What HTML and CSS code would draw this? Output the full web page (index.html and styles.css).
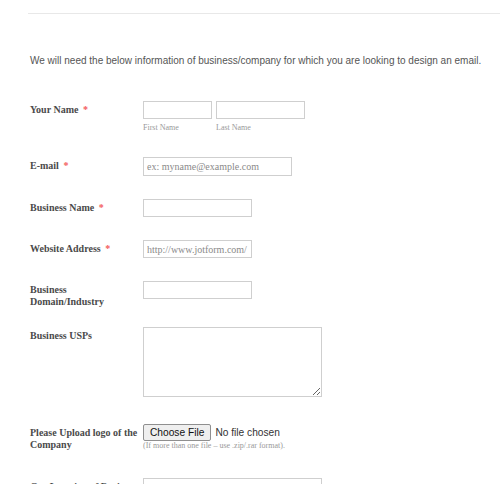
FILE: index.html
```html
<!DOCTYPE html>
<html lang="en">
<head>
    <meta charset="UTF-8">
    <meta name="viewport" content="width=device-width, initial-scale=1.0">
    <title>Email Design Request</title>
    <link rel="stylesheet" href="styles.css">
</head>
<body>
    <div class="page">
        <div class="divider"></div>

        <p class="intro">We will need the below information of business/company for which you are looking to design an email.</p>

        <ul class="form-list">
            <li class="form-line">
                <label class="form-label">Your Name <span class="required">*</span></label>
                <div class="form-input">
                    <div class="name-fields">
                        <span class="sub-field">
                            <input type="text" class="text-input first-name">
                            <span class="sub-label">First Name</span>
                        </span>
                        <span class="sub-field">
                            <input type="text" class="text-input last-name">
                            <span class="sub-label">Last Name</span>
                        </span>
                    </div>
                </div>
            </li>

            <li class="form-line">
                <label class="form-label">E-mail <span class="required">*</span></label>
                <div class="form-input">
                    <input type="email" class="text-input email" placeholder="ex: myname@example.com">
                </div>
            </li>

            <li class="form-line">
                <label class="form-label">Business Name <span class="required">*</span></label>
                <div class="form-input">
                    <input type="text" class="text-input short">
                </div>
            </li>

            <li class="form-line">
                <label class="form-label">Website Address <span class="required">*</span></label>
                <div class="form-input">
                    <input type="text" class="text-input short" placeholder="http://www.jotform.com/">
                </div>
            </li>

            <li class="form-line form-line-tight">
                <label class="form-label">Business Domain/Industry</label>
                <div class="form-input">
                    <input type="text" class="text-input short">
                </div>
            </li>

            <li class="form-line">
                <label class="form-label">Business USPs</label>
                <div class="form-input">
                    <textarea class="textarea"></textarea>
                </div>
            </li>

            <li class="form-line form-line-loose">
                <label class="form-label">Please Upload logo of the Company</label>
                <div class="form-input">
                    <input type="file" class="file-input">
                    <span class="sub-label file-note">(If more than one file &ndash; use .zip/.rar format).</span>
                </div>
            </li>

            <li class="form-line">
                <label class="form-label">Geo Location of Business</label>
                <div class="form-input">
                    <textarea class="textarea"></textarea>
                </div>
            </li>
        </ul>
    </div>
</body>
</html>
```

FILE: styles.css
```css
body {
    margin: 0;
    background-color: #fff;
    color: #555;
    font-family: "Liberation Serif", "Times New Roman", serif;
}
.page {
    padding: 13px 0 0 28px;
}
.divider {
    border-top: 1px solid #e8e8e8;
}
.intro {
    font-family: "Liberation Sans", Arial, sans-serif;
    font-size: 10px;
    line-height: 14px;
    color: #555;
    margin: 40px 0 0 2px;
}
.form-list {
    list-style: none;
    margin: 33px 0 0 2px;
    padding: 0;
}
.form-line {
    display: flex;
    align-items: flex-start;
    margin-bottom: 23px;
}
.form-line-tight {
    margin-bottom: 19px;
}
.form-line-loose {
    margin-bottom: 27px;
}
.form-label {
    width: 113px;
    flex-shrink: 0;
    font-size: 10px;
    font-weight: bold;
    line-height: 12px;
    color: #4a4a4a;
    padding-top: 3px;
    box-sizing: border-box;
    padding-right: 2px;
}
.required {
    color: #f35a5a;
    margin-left: 2px;
}
.form-input {
    display: flex;
    flex-direction: column;
    align-items: flex-start;
}
.name-fields {
    display: flex;
    gap: 4px;
}
.sub-field {
    display: flex;
    flex-direction: column;
}
.text-input {
    box-sizing: border-box;
    height: 18px;
    border: 1px solid #cfcfcf;
    padding: 0 3px;
    margin: 0;
    font-family: "Liberation Serif", "Times New Roman", serif;
    font-size: 10px;
    color: #555;
    background: #fff;
    border-radius: 0;
    outline: none;
}
.text-input::placeholder {
    color: #8a8a8a;
}
.first-name {
    width: 69px;
}
.last-name {
    width: 89px;
}
.email {
    width: 149px;
    height: 19px;
}
.short {
    width: 109px;
}
.sub-label {
    display: block;
    font-size: 8px;
    line-height: 12px;
    color: #999;
    margin-top: 3px;
}
.textarea {
    box-sizing: border-box;
    width: 179px;
    height: 70px;
    border: 1px solid #cfcfcf;
    margin: 0 0 4px;
    padding: 2px;
    font-family: "Liberation Serif", "Times New Roman", serif;
    font-size: 10px;
    display: block;
    border-radius: 0;
}
.file-input {
    display: block;
    font-family: "Liberation Sans", Arial, sans-serif;
    font-size: 10.2px;
    color: #333;
    height: 17px;
    margin: 0;
}
.file-input::file-selector-button {
    font-family: "Liberation Sans", Arial, sans-serif;
    font-size: 10.2px;
    height: 17px;
    padding: 0 6px;
    margin-right: 4px;
    border: 1px solid #8f8f8f;
    border-radius: 2px;
    background-color: #efefef;
    color: #111;
}
.file-note {
    margin-top: 0;
    line-height: 10px;
}
```
